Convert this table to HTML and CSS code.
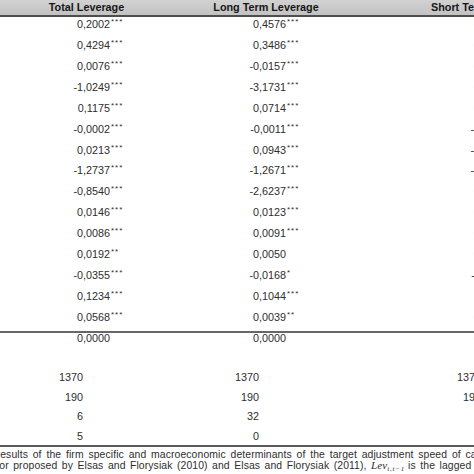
FILE: index.html
```html
<!DOCTYPE html>
<html>
<head>
<meta charset="utf-8">
<link rel="stylesheet" href="styles.css">
</head>
<body>
<div class="sheet">
  <div class="head">
    <div class="h1">Total Leverage</div>
    <div class="h2">Long Term Leverage</div>
    <div class="h3">Short Term Leverage</div>
  </div>
  <div class="body">
    <div class="row"><div class="c c1"><span class="n">0,2002</span><span class="s">***</span></div><div class="c c2"><span class="n">0,4576</span><span class="s">***</span></div><div class="c c3"><span class="n">0,3315</span><span class="s">***</span></div></div>
    <div class="row"><div class="c c1"><span class="n">0,4294</span><span class="s">***</span></div><div class="c c2"><span class="n">0,3486</span><span class="s">***</span></div><div class="c c3"><span class="n">0,4021</span><span class="s">***</span></div></div>
    <div class="row"><div class="c c1"><span class="n">0,0076</span><span class="s">***</span></div><div class="c c2"><span class="n">-0,0157</span><span class="s">***</span></div><div class="c c3"><span class="n">0,0214</span><span class="s">***</span></div></div>
    <div class="row"><div class="c c1"><span class="n">-1,0249</span><span class="s">***</span></div><div class="c c2"><span class="n">-3,1731</span><span class="s">***</span></div><div class="c c3"><span class="n">0,8812</span><span class="s">***</span></div></div>
    <div class="row"><div class="c c1"><span class="n">0,1175</span><span class="s">***</span></div><div class="c c2"><span class="n">0,0714</span><span class="s">***</span></div><div class="c c3"><span class="n">0,1260</span><span class="s">***</span></div></div>
    <div class="row"><div class="c c1"><span class="n">-0,0002</span><span class="s">***</span></div><div class="c c2"><span class="n">-0,0011</span><span class="s">***</span></div><div class="c c3"><span class="n">-0,0009</span><span class="s">***</span></div></div>
    <div class="row"><div class="c c1"><span class="n">0,0213</span><span class="s">***</span></div><div class="c c2"><span class="n">0,0943</span><span class="s">***</span></div><div class="c c3"><span class="n">-0,0512</span><span class="s">***</span></div></div>
    <div class="row"><div class="c c1"><span class="n">-1,2737</span><span class="s">***</span></div><div class="c c2"><span class="n">-1,2671</span><span class="s">***</span></div><div class="c c3"><span class="n">-0,6284</span><span class="s">***</span></div></div>
    <div class="row"><div class="c c1"><span class="n">-0,8540</span><span class="s">***</span></div><div class="c c2"><span class="n">-2,6237</span><span class="s">***</span></div><div class="c c3"><span class="n">0,4470</span><span class="s">***</span></div></div>
    <div class="row"><div class="c c1"><span class="n">0,0146</span><span class="s">***</span></div><div class="c c2"><span class="n">0,0123</span><span class="s">***</span></div><div class="c c3"><span class="n">0,0102</span><span class="s">***</span></div></div>
    <div class="row"><div class="c c1"><span class="n">0,0086</span><span class="s">***</span></div><div class="c c2"><span class="n">0,0091</span><span class="s">***</span></div><div class="c c3"><span class="n">0,0057</span><span class="s">***</span></div></div>
    <div class="row"><div class="c c1"><span class="n">0,0192</span><span class="s">**</span></div><div class="c c2"><span class="n">0,0050</span></div><div class="c c3"><span class="n">0,0233</span><span class="s">**</span></div></div>
    <div class="row"><div class="c c1"><span class="n">-0,0355</span><span class="s">***</span></div><div class="c c2"><span class="n">-0,0168</span><span class="s">*</span></div><div class="c c3"><span class="n">-0,0211</span><span class="s">**</span></div></div>
    <div class="row"><div class="c c1"><span class="n">0,1234</span><span class="s">***</span></div><div class="c c2"><span class="n">0,1044</span><span class="s">***</span></div><div class="c c3"><span class="n">0,1187</span><span class="s">***</span></div></div>
    <div class="row"><div class="c c1"><span class="n">0,0568</span><span class="s">***</span></div><div class="c c2"><span class="n">0,0039</span><span class="s">**</span></div><div class="c c3"><span class="n">0,0602</span><span class="s">***</span></div></div>
  </div>
  <div class="foot">
    <div class="frow"><div class="c c1"><span class="n">0,0000</span></div><div class="c c2"><span class="n">0,0000</span></div><div class="c c3"><span class="n">0,0000</span></div></div>
    <div class="frow"></div>
    <div class="frow"><div class="i i1">1370</div><div class="i i2">1370</div><div class="i i3">1370</div></div>
    <div class="frow"><div class="i i1">190</div><div class="i i2">190</div><div class="i i3">190</div></div>
    <div class="frow"><div class="i i1">6</div><div class="i i2">32</div><div class="i i3">4</div></div>
    <div class="frow last"><div class="i i1">5</div><div class="i i2">0</div><div class="i i3">3</div></div>
  </div>
  <div class="caption">
    <div class="line l1">Results of the firm specific and macroeconomic determinants of the target adjustment speed of capital</div>
    <div class="line l2">tor proposed by Elsas and Florysiak (2010) and Elsas and Florysiak (2011), <span class="lev">Lev<sub>i,t−1</sub></span>is the lagged leverage</div>
  </div>
</div>
</body>
</html>
```
FILE: styles.css
```css
html, body {
  margin: 0;
  padding: 0;
  overflow: hidden;
  background: #ffffff;
}
body {
  width: 474px;
  height: 474px;
  font-family: "Liberation Sans", Arial, sans-serif;
  color: #2e2e2e;
}
.sheet {
  width: 600px;
}
.head {
  display: grid;
  grid-template-columns: 173px 186px 1fr;
  height: 15px;
  line-height: 14px;
  background: linear-gradient(#d2d2d2, #c2c2c2);
  border-bottom: 2px solid #4d4d4d;
  font-weight: bold;
  font-size: 10.8px;
  color: #161616;
  white-space: nowrap;
}
.h1, .h2 {
  text-align: center;
}
.h3 {
  padding-left: 72px;
}
.row, .frow {
  display: grid;
  grid-template-columns: 173px 186px 1fr;
  align-items: start;
  font-size: 10.8px;
  white-space: nowrap;
}
.row {
  height: 20.93px;
  line-height: 13px;
}
.body {
  padding-top: 1px;
}
.foot {
  border-top: 2px solid #666666;
  margin-top: -1px;
}
.frow {
  height: 19.6px;
  line-height: 11px;
}
.frow.last {
  height: 14px;
}
.c {
  display: flex;
}
.c1 { padding-left: 70px; }
.c2 { padding-left: 73px; }
.c3 { padding-left: 108px; }
.n {
  width: 40px;
  text-align: right;
  flex: none;
}
.s {
  font-size: 8px;
  letter-spacing: 1px;
  position: relative;
  top: -3px;
  padding-left: 1px;
}
.i {
  text-align: right;
}
.i1 { width: 83px; }
.i2 { width: 86px; }
.i3 { width: 122px; }
.caption {
  border-top: 2px solid #5a5a5a;
  padding-top: 2px;
  font-size: 10.4px;
  line-height: 11px;
  color: #2e2e2e;
  white-space: nowrap;
}
.l1 {
  margin-left: -7.4px;
  word-spacing: 1.8px;
  letter-spacing: 0.1px;
}
.l2 {
  margin-left: -3.7px;
  word-spacing: 1.5px;
  letter-spacing: 0.1px;
}
.lev {
  font-family: "Liberation Serif", "Times New Roman", serif;
  font-style: italic;
  font-size: 11px;
  word-spacing: 0;
  margin-right: 3px;
}
.lev sub {
  font-size: 7px;
  letter-spacing: 0.8px;
  vertical-align: -2px;
  line-height: 0;
}
```
